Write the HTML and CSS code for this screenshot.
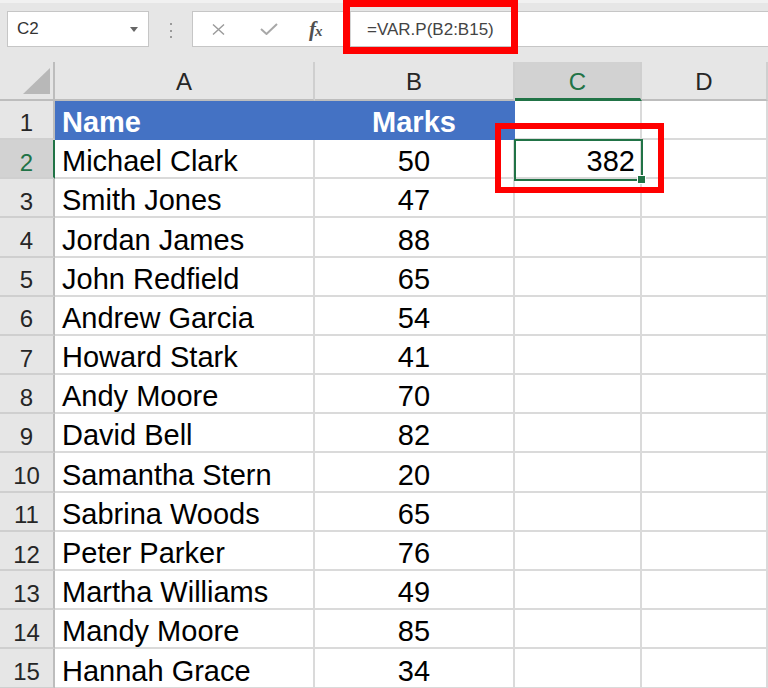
FILE: index.html
```html
<!DOCTYPE html>
<html>
<head>
<meta charset="utf-8">
<link rel="stylesheet" href="styles.css">
</head>
<body>
<div class="app">
  <div class="toolbar">
    <div class="namebox"><span class="nb-text">C2</span><span class="nb-arrow"></span></div>
    <div class="grip"><span></span><span></span><span></span></div>
    <div class="fbar">
      <div class="fbtns">
        <svg class="ic-x" width="13" height="11" viewBox="0 0 13 11"><path d="M1 0.5 L12 10.5 M12 0.5 L1 10.5" stroke="#9a9a9a" stroke-width="1.4" fill="none"/></svg>
        <svg class="ic-check" width="18" height="12" viewBox="0 0 18 12"><path d="M1 6 L6.5 11 L17 1" stroke="#a8a8a8" stroke-width="2" fill="none"/></svg>
        <span class="fx"><i>f</i><i class="fx-x">x</i></span>
      </div>
      <div class="finput">=VAR.P(B2:B15)</div>
    </div>
  </div>
  <div class="sheet">
    <div class="corner"><svg width="27" height="26" viewBox="0 0 27 26"><polygon points="27,0 27,26 0,26" fill="#b8b8b8"/></svg></div>
    <div class="ch">A</div>
    <div class="ch">B</div>
    <div class="ch sel">C</div>
    <div class="ch">D</div>

    <div class="rh">1</div><div class="c hd">Name</div><div class="c hd num">Marks</div><div class="c"></div><div class="c"></div>
    <div class="rh sel">2</div><div class="c">Michael Clark</div><div class="c num">50</div><div class="c right">382</div><div class="c"></div>
    <div class="rh">3</div><div class="c">Smith Jones</div><div class="c num">47</div><div class="c"></div><div class="c"></div>
    <div class="rh">4</div><div class="c">Jordan James</div><div class="c num">88</div><div class="c"></div><div class="c"></div>
    <div class="rh">5</div><div class="c">John Redfield</div><div class="c num">65</div><div class="c"></div><div class="c"></div>
    <div class="rh">6</div><div class="c">Andrew Garcia</div><div class="c num">54</div><div class="c"></div><div class="c"></div>
    <div class="rh">7</div><div class="c">Howard Stark</div><div class="c num">41</div><div class="c"></div><div class="c"></div>
    <div class="rh">8</div><div class="c">Andy Moore</div><div class="c num">70</div><div class="c"></div><div class="c"></div>
    <div class="rh">9</div><div class="c">David Bell</div><div class="c num">82</div><div class="c"></div><div class="c"></div>
    <div class="rh">10</div><div class="c">Samantha Stern</div><div class="c num">20</div><div class="c"></div><div class="c"></div>
    <div class="rh">11</div><div class="c">Sabrina Woods</div><div class="c num">65</div><div class="c"></div><div class="c"></div>
    <div class="rh">12</div><div class="c">Peter Parker</div><div class="c num">76</div><div class="c"></div><div class="c"></div>
    <div class="rh">13</div><div class="c">Martha Williams</div><div class="c num">49</div><div class="c"></div><div class="c"></div>
    <div class="rh">14</div><div class="c">Mandy Moore</div><div class="c num">85</div><div class="c"></div><div class="c"></div>
    <div class="rh">15</div><div class="c">Hannah Grace</div><div class="c num">34</div><div class="c"></div><div class="c"></div>
  </div>
  <div class="selbox"><span class="handle"></span></div>
  <div class="hl hl-formula"></div>
  <div class="hl hl-cell"></div>
</div>
</body>
</html>
```
FILE: styles.css
```css
html, body {
  margin: 0;
  padding: 0;
}
body {
  width: 768px;
  height: 688px;
  overflow: hidden;
  background: #ffffff;
  font-family: "Liberation Sans", Arial, sans-serif;
}
.app {
  position: relative;
  width: 768px;
  height: 688px;
  overflow: hidden;
}
.toolbar {
  height: 62px;
  box-sizing: border-box;
  background: #e6e6e6;
  border-top: 3px solid #f1f1f1;
  padding: 8px 0 0 7px;
  display: flex;
  align-items: flex-start;
}
.namebox {
  width: 142px;
  height: 36px;
  box-sizing: border-box;
  border: 1px solid #c6c6c6;
  background: #ffffff;
  display: flex;
  align-items: center;
  padding: 0 10px 0 9px;
  font-family: "Liberation Sans", Arial, sans-serif;
  font-size: 17px;
  color: #333333;
}
.nb-text {
  flex: 1;
}
.nb-arrow {
  width: 0;
  height: 0;
  border-left: 4px solid transparent;
  border-right: 4px solid transparent;
  border-top: 5px solid #666666;
}
.grip {
  display: flex;
  flex-direction: column;
  gap: 4.5px;
  margin: 12px 0 0 21px;
}
.grip span {
  width: 2px;
  height: 2px;
  background: #9a9a9a;
}
.fbar {
  flex: 1;
  display: flex;
  height: 36px;
  box-sizing: border-box;
  border: 1px solid #c6c6c6;
  border-right: none;
  background: #ffffff;
  margin-left: 20px;
}
.fbtns {
  width: 158px;
  box-sizing: border-box;
  border-right: 1px solid #d4d4d4;
  display: flex;
  align-items: center;
  padding-left: 19px;
}
.ic-x {
  margin-right: 35px;
}
.ic-check {
  margin-right: 31px;
}
.fx {
  font-family: "Liberation Serif", "DejaVu Serif", serif;
  color: #505050;
  font-size: 21px;
  line-height: 1;
  font-weight: bold;
}
.fx i {
  font-style: italic;
}
.fx-x {
  font-size: 15px;
  margin-left: -1px;
}
.finput {
  display: flex;
  align-items: center;
  padding-left: 16px;
  font-family: "Liberation Sans", Arial, sans-serif;
  font-size: 17px;
  color: #444444;
  line-height: 1;
}
.sheet {
  display: grid;
  grid-template-columns: 55px 260px 200px 127px 126px;
  grid-template-rows: 38.8px repeat(15, 39.2px);
}
.corner {
  box-sizing: border-box;
  background: #e6e6e6;
  border-right: 2px solid #bdbdbd;
  border-bottom: 2px solid #bdbdbd;
  display: flex;
  justify-content: flex-end;
  align-items: flex-end;
  padding: 0 3px 5px 0;
}
.corner svg {
  display: block;
}
.ch {
  box-sizing: border-box;
  background: #e6e6e6;
  border-right: 2px solid #cfcfcf;
  border-bottom: 2px solid #bdbdbd;
  display: flex;
  justify-content: center;
  align-items: flex-end;
  padding-bottom: 5px;
  font-size: 24px;
  line-height: 1;
  color: #262626;
}
.ch.sel {
  background: #d2d2d2;
  color: #217346;
  border-bottom: 3px solid #217346;
  padding-bottom: 4px;
}
.rh {
  box-sizing: border-box;
  background: #e6e6e6;
  border-right: 2px solid #bdbdbd;
  border-bottom: 2px solid #cfcfcf;
  display: flex;
  justify-content: center;
  align-items: flex-end;
  padding-bottom: 2.5px;
  font-size: 24px;
  line-height: 1;
  color: #262626;
}
.rh.sel {
  background: #d2d2d2;
  color: #217346;
  border-right-color: #217346;
}
.c {
  box-sizing: border-box;
  border-right: 2px solid #dadada;
  border-bottom: 2px solid #dadada;
  display: flex;
  align-items: flex-end;
  padding: 0 7px 1px 7px;
  font-size: 29px;
  line-height: 1;
  color: #000000;
  white-space: nowrap;
  overflow: hidden;
}
.c.num {
  justify-content: center;
  padding-left: 0;
  padding-right: 0;
}
.c.right {
  justify-content: flex-end;
  padding-right: 5px;
}
.c.hd {
  background: #4472c4;
  color: #ffffff;
  font-weight: bold;
  border-color: #4472c4;
}
.selbox {
  position: absolute;
  left: 514px;
  top: 139px;
  width: 129px;
  height: 42px;
  box-sizing: border-box;
  border: 2px solid #217346;
}
.handle {
  position: absolute;
  right: -5px;
  bottom: -5px;
  width: 7px;
  height: 7px;
  background: #217346;
  border: 1px solid #ffffff;
}
.hl {
  position: absolute;
  box-sizing: border-box;
  border: 7px solid #ff0000;
}
.hl-formula {
  left: 343px;
  top: 0;
  width: 175px;
  height: 54px;
}
.hl-cell {
  left: 495px;
  top: 123px;
  width: 169px;
  height: 70px;
  border-width: 6px;
}
```
